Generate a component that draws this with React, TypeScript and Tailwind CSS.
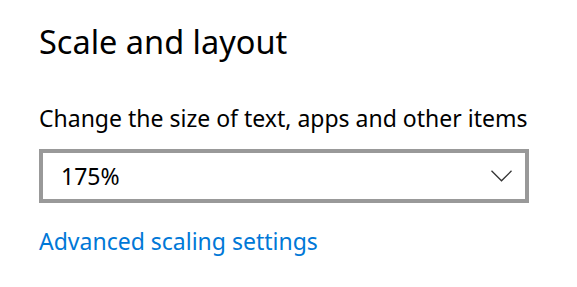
export default function App() {
  return (
    <div className="w-[577px] h-[287px] bg-white font-['Noto_Sans',sans-serif] text-black pl-[39px] pt-[20px]">
      <h1 className="text-[32.5px] leading-[44px] font-normal">Scale and layout</h1>
      <p className="mt-[39px] text-[23px] leading-[30px]">Change the size of text, apps and other items</p>
      <button className="mt-[16px] w-[490px] h-[54px] border-4 border-[#999999] flex items-center justify-between pl-[18px] pr-[13px] text-[23px]">
        <span>175%</span>
        <svg width="21" height="12" viewBox="0 0 21 12" fill="none" className="shrink-0">
          <path d="M0.5 0.8 L10.5 10.8 L20.5 0.8" stroke="#333" strokeWidth="1.3" />
        </svg>
      </button>
      <a href="#" className="block mt-[23px] text-[23px] leading-[30px] text-[#0078d7] w-fit">Advanced scaling settings</a>
    </div>
  );
}
